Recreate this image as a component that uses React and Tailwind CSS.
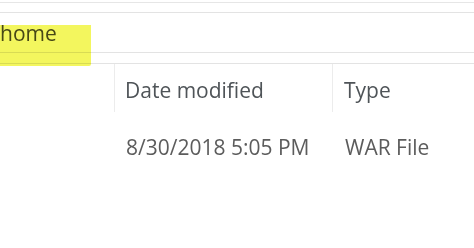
import React from "react";

export default function App() {
    return (
        <div
            className="w-[474px] h-[248px] bg-white overflow-hidden relative"
            style={{ fontFamily: '"Open Sans", "Noto Sans", sans-serif' }}
        >
            {/* top edge */}
            <div className="h-[2px]" />
            <div className="h-px bg-[#e6e6e6]" />
            <div className="h-[9px]" />

            {/* address bar */}
            <div className="h-[41px] border-t border-b border-[#e3e3e3] flex items-center">
                <span className="text-[21px] leading-none text-[#4a4a3a] mt-[2px]">home</span>
            </div>

            <div className="h-[11px] border-b border-[#e3e3e3]" />

            {/* highlighter mark */}
            <div className="absolute left-0 top-[25px] w-[91px] h-[41px] bg-[#f3f65e] mix-blend-multiply rounded-br-[2px]" />

            {/* column headers */}
            <div className="flex h-[48px] text-[21px] text-[#4f5458]">
                <div className="w-[115px] border-r border-[#ececec]" />
                <div className="w-[218px] border-r border-[#ececec] pl-[10px] pt-[5px] flex items-center">
                    Date modified
                </div>
                <div className="flex-1 pl-[11px] pt-[5px] flex items-center">Type</div>
            </div>

            {/* row */}
            <div className="flex mt-[20px] text-[21px] text-[#5c5c5c]">
                <div className="w-[116px]" />
                <div className="w-[218px] pl-[10px]">8/30/2018 5:05 PM</div>
                <div className="flex-1 pl-[11px]">WAR File</div>
            </div>
        </div>
    );
}
